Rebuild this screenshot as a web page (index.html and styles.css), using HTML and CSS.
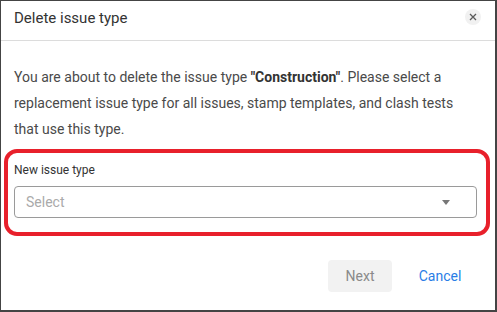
FILE: index.html
```html
<!DOCTYPE html>
<html>
<head>
<meta charset="utf-8">
<link rel="stylesheet" href="styles.css">
</head>
<body>
<div class="dialog">
  <div class="header">
    <div class="title">Delete issue type</div>
    <button class="close" aria-label="Close">
      <svg width="8" height="8" viewBox="0 0 8 8"><path d="M1 1L7 7M7 1L1 7" stroke="#5a5a5a" stroke-width="1.3" fill="none"/></svg>
    </button>
  </div>
  <p class="message">You are about to delete the issue type <b>"Construction"</b>. Please select a replacement issue type for all issues, stamp templates, and clash tests that use this type.</p>
  <div class="field">
    <div class="label">New issue type</div>
    <div class="select">
      <span class="placeholder">Select</span>
      <span class="caret"></span>
    </div>
  </div>
  <div class="footer">
    <button class="btn next">Next</button>
    <button class="btn cancel">Cancel</button>
  </div>
</div>
</body>
</html>
```
FILE: styles.css
```css
html, body {
  margin: 0;
  padding: 0;
  background: #fff;
}
.dialog {
  width: 497px;
  height: 312px;
  box-sizing: border-box;
  border-style: solid;
  border-color: #444;
  border-width: 1px 2px 2px 1px;
  background: #fff;
  display: flex;
  flex-direction: column;
  font-family: Roboto, "Liberation Sans", sans-serif;
  color: #4a4a4a;
}
.header {
  height: 40px;
  box-sizing: border-box;
  border-bottom: 1px solid #dcdcdc;
  display: flex;
  align-items: flex-start;
  justify-content: space-between;
  padding: 7px 14px 0 13px;
}
.title {
  font-size: 15px;
  line-height: 20px;
  color: #333;
}
.close {
  width: 16px;
  height: 16px;
  margin-top: 1px;
  border: none;
  border-radius: 50%;
  background: #f1f1f1;
  padding: 0;
  display: flex;
  align-items: center;
  justify-content: center;
}
.message {
  margin: 23px 14px 0 13px;
  font-size: 14px;
  line-height: 26px;
  color: #4a4a4a;
}
.message b {
  color: #333;
}
.field {
  margin: 7px 5px 0 3px;
  border: 4.5px solid #e8202b;
  border-radius: 13px;
  padding: 9px 9px 14px 6px;
}
.label {
  font-size: 12px;
  line-height: 16px;
  color: #333;
}
.select {
  margin-top: 8px;
  height: 32px;
  box-sizing: border-box;
  border: 1px solid #9a9a9a;
  border-radius: 4px;
  display: flex;
  align-items: center;
  justify-content: space-between;
  padding: 0 26px 0 11px;
}
.placeholder {
  font-size: 14px;
  color: #aaa;
}
.caret {
  width: 0;
  height: 0;
  border-left: 4.5px solid transparent;
  border-right: 4.5px solid transparent;
  border-top: 5px solid #777;
}
.footer {
  display: flex;
  justify-content: flex-end;
  gap: 16px;
  padding: 24px 23px 0 0;
}
.btn {
  width: 64px;
  height: 32px;
  border: none;
  border-radius: 4px;
  font-family: Roboto, "Liberation Sans", sans-serif;
  font-size: 14px;
  padding: 0;
  background: transparent;
}
.next {
  background: #f2f2f2;
  color: #8a8a8a;
}
.cancel {
  color: #2a7de6;
}
```
